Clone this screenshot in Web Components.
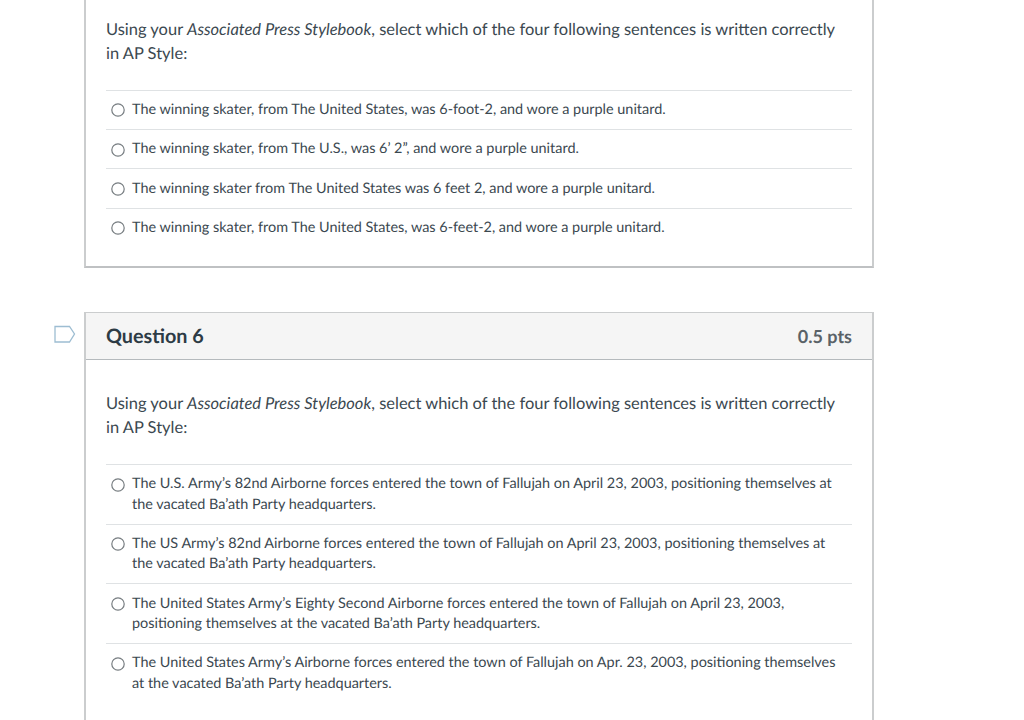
<!DOCTYPE html>
<html>
<head>
<meta charset="utf-8">
<style>
	html, body { margin: 0; height: 720px; overflow: hidden; background: #fff; }
	body { font-family: Lato, "Liberation Sans", sans-serif; color: #2d3b45; text-rendering: geometricPrecision; }
	quiz-page { margin-top: -2px; }
</style>
</head>
<body>
<quiz-page>
	<quiz-question>
		<span slot="prompt">Using your <em>Associated Press Stylebook</em>, select which of the four following sentences is written correctly in AP Style:</span>
		<quiz-answer>The winning skater, from The United States, was 6-foot-2, and wore a purple unitard.</quiz-answer>
		<quiz-answer>The winning skater, from The U.S., was 6’ 2”, and wore a purple unitard.</quiz-answer>
		<quiz-answer>The winning skater from The United States was 6 feet 2, and wore a purple unitard.</quiz-answer>
		<quiz-answer>The winning skater, from The United States, was 6-feet-2, and wore a purple unitard.</quiz-answer>
	</quiz-question>
	<quiz-question heading="Question 6" points="0.5 pts" flagged>
		<span slot="prompt">Using your <em>Associated Press Stylebook</em>, select which of the four following sentences is written correctly in AP Style:</span>
		<quiz-answer>The U.S. Army’s 82nd Airborne forces entered the town of Fallujah on April 23, 2003, positioning themselves at the vacated Ba’ath Party headquarters.</quiz-answer>
		<quiz-answer>The US Army’s 82nd Airborne forces entered the town of Fallujah on April 23, 2003, positioning themselves at the vacated Ba’ath Party headquarters.</quiz-answer>
		<quiz-answer>The United States Army’s Eighty Second Airborne forces entered the town of Fallujah on April 23, 2003, positioning themselves at the vacated Ba’ath Party headquarters.</quiz-answer>
		<quiz-answer>The United States Army’s Airborne forces entered the town of Fallujah on Apr. 23, 2003, positioning themselves at the vacated Ba’ath Party headquarters.</quiz-answer>
	</quiz-question>
</quiz-page>
<script>
class QuizPage extends HTMLElement
{
	constructor()
	{
		super();
		this.attachShadow({ mode: "open" });
		this.shadowRoot.innerHTML = `
			<style>
				:host { display: flex; flex-direction: column; gap: 44px; padding-left: 84px; width: 790px; }
			</style>
			<slot></slot>
		`;
	}
}

const questionTemplate = document.createElement("template");
questionTemplate.innerHTML = `
	<style>
		:host { display: block; position: relative; border: 2px solid #cbcdce; border-top-width: 1px; border-bottom-color: #bfc1c3; }
		header
		{
			display: flex;
			justify-content: space-between;
			align-items: center;
			height: 46px;
			padding: 0 20px;
			background: #f5f5f5;
			border-bottom: 1px solid #b5babd;
		}
		header[hidden] { display: none; }
		h2 { margin: 0; font-size: 19.8px; font-weight: 700; color: #2d3b45; }
		.points { font-size: 18px; font-weight: 700; color: #5a6268; }
		.flag { position: absolute; left: -32px; top: 12px; }
		.body { padding: 18px 20px 19.2px; }
		:host([heading]) .body { padding-top: 31px; padding-bottom: 40px; }
		.prompt { font-size: 16.48px; line-height: 24px; margin-bottom: 24.8px; color: #3b4850; }
		.answers { border-top: 1px solid #dfe2e4; }
	</style>
	<svg class="flag" width="22" height="18" viewBox="0 0 22 18">
		<path d="M1 1.5H15.5L20.5 9L15.5 17H1Z" fill="#fff" stroke="#9dbdd2" stroke-width="1.3"/>
	</svg>
	<header hidden><h2></h2><span class="points"></span></header>
	<div class="body">
		<div class="prompt"><slot name="prompt"></slot></div>
		<div class="answers"><slot></slot></div>
	</div>
`;

class QuizQuestion extends HTMLElement
{
	constructor()
	{
		super();
		this.attachShadow({ mode: "open" });
		this.shadowRoot.appendChild(questionTemplate.content.cloneNode(true));
	}

	connectedCallback()
	{
		const heading = this.getAttribute("heading");
		if (heading)
		{
			this.shadowRoot.querySelector("header").hidden = false;
			this.shadowRoot.querySelector("h2").innerText = heading;
			this.shadowRoot.querySelector(".points").innerText = this.getAttribute("points");
		}
		if (!this.hasAttribute("flagged"))
			this.shadowRoot.querySelector(".flag").remove();
	}
}

const answerTemplate = document.createElement("template");
answerTemplate.innerHTML = `
	<style>
		:host
		{
			display: flex;
			gap: 7px;
			padding: 9.2px 4px 8.6px 5px;
			font-size: 14.43px;
			line-height: 20.5px;
			color: #3b4850;
			border-bottom: 1px solid #dfe2e4;
		}
		:host(:last-child) { border-bottom: none; }
		svg { flex: none; margin-top: 3.5px; }
	</style>
	<svg width="14" height="14" viewBox="0 0 14 14">
		<circle cx="7" cy="7" r="6.2" fill="#fff" stroke="#777d81" stroke-width="1.2"/>
	</svg>
	<span><slot></slot></span>
`;

class QuizAnswer extends HTMLElement
{
	constructor()
	{
		super();
		this.attachShadow({ mode: "open" });
		this.shadowRoot.appendChild(answerTemplate.content.cloneNode(true));
	}
}

window.customElements.define("quiz-page", QuizPage);
window.customElements.define("quiz-question", QuizQuestion);
window.customElements.define("quiz-answer", QuizAnswer);
</script>
</body>
</html>
